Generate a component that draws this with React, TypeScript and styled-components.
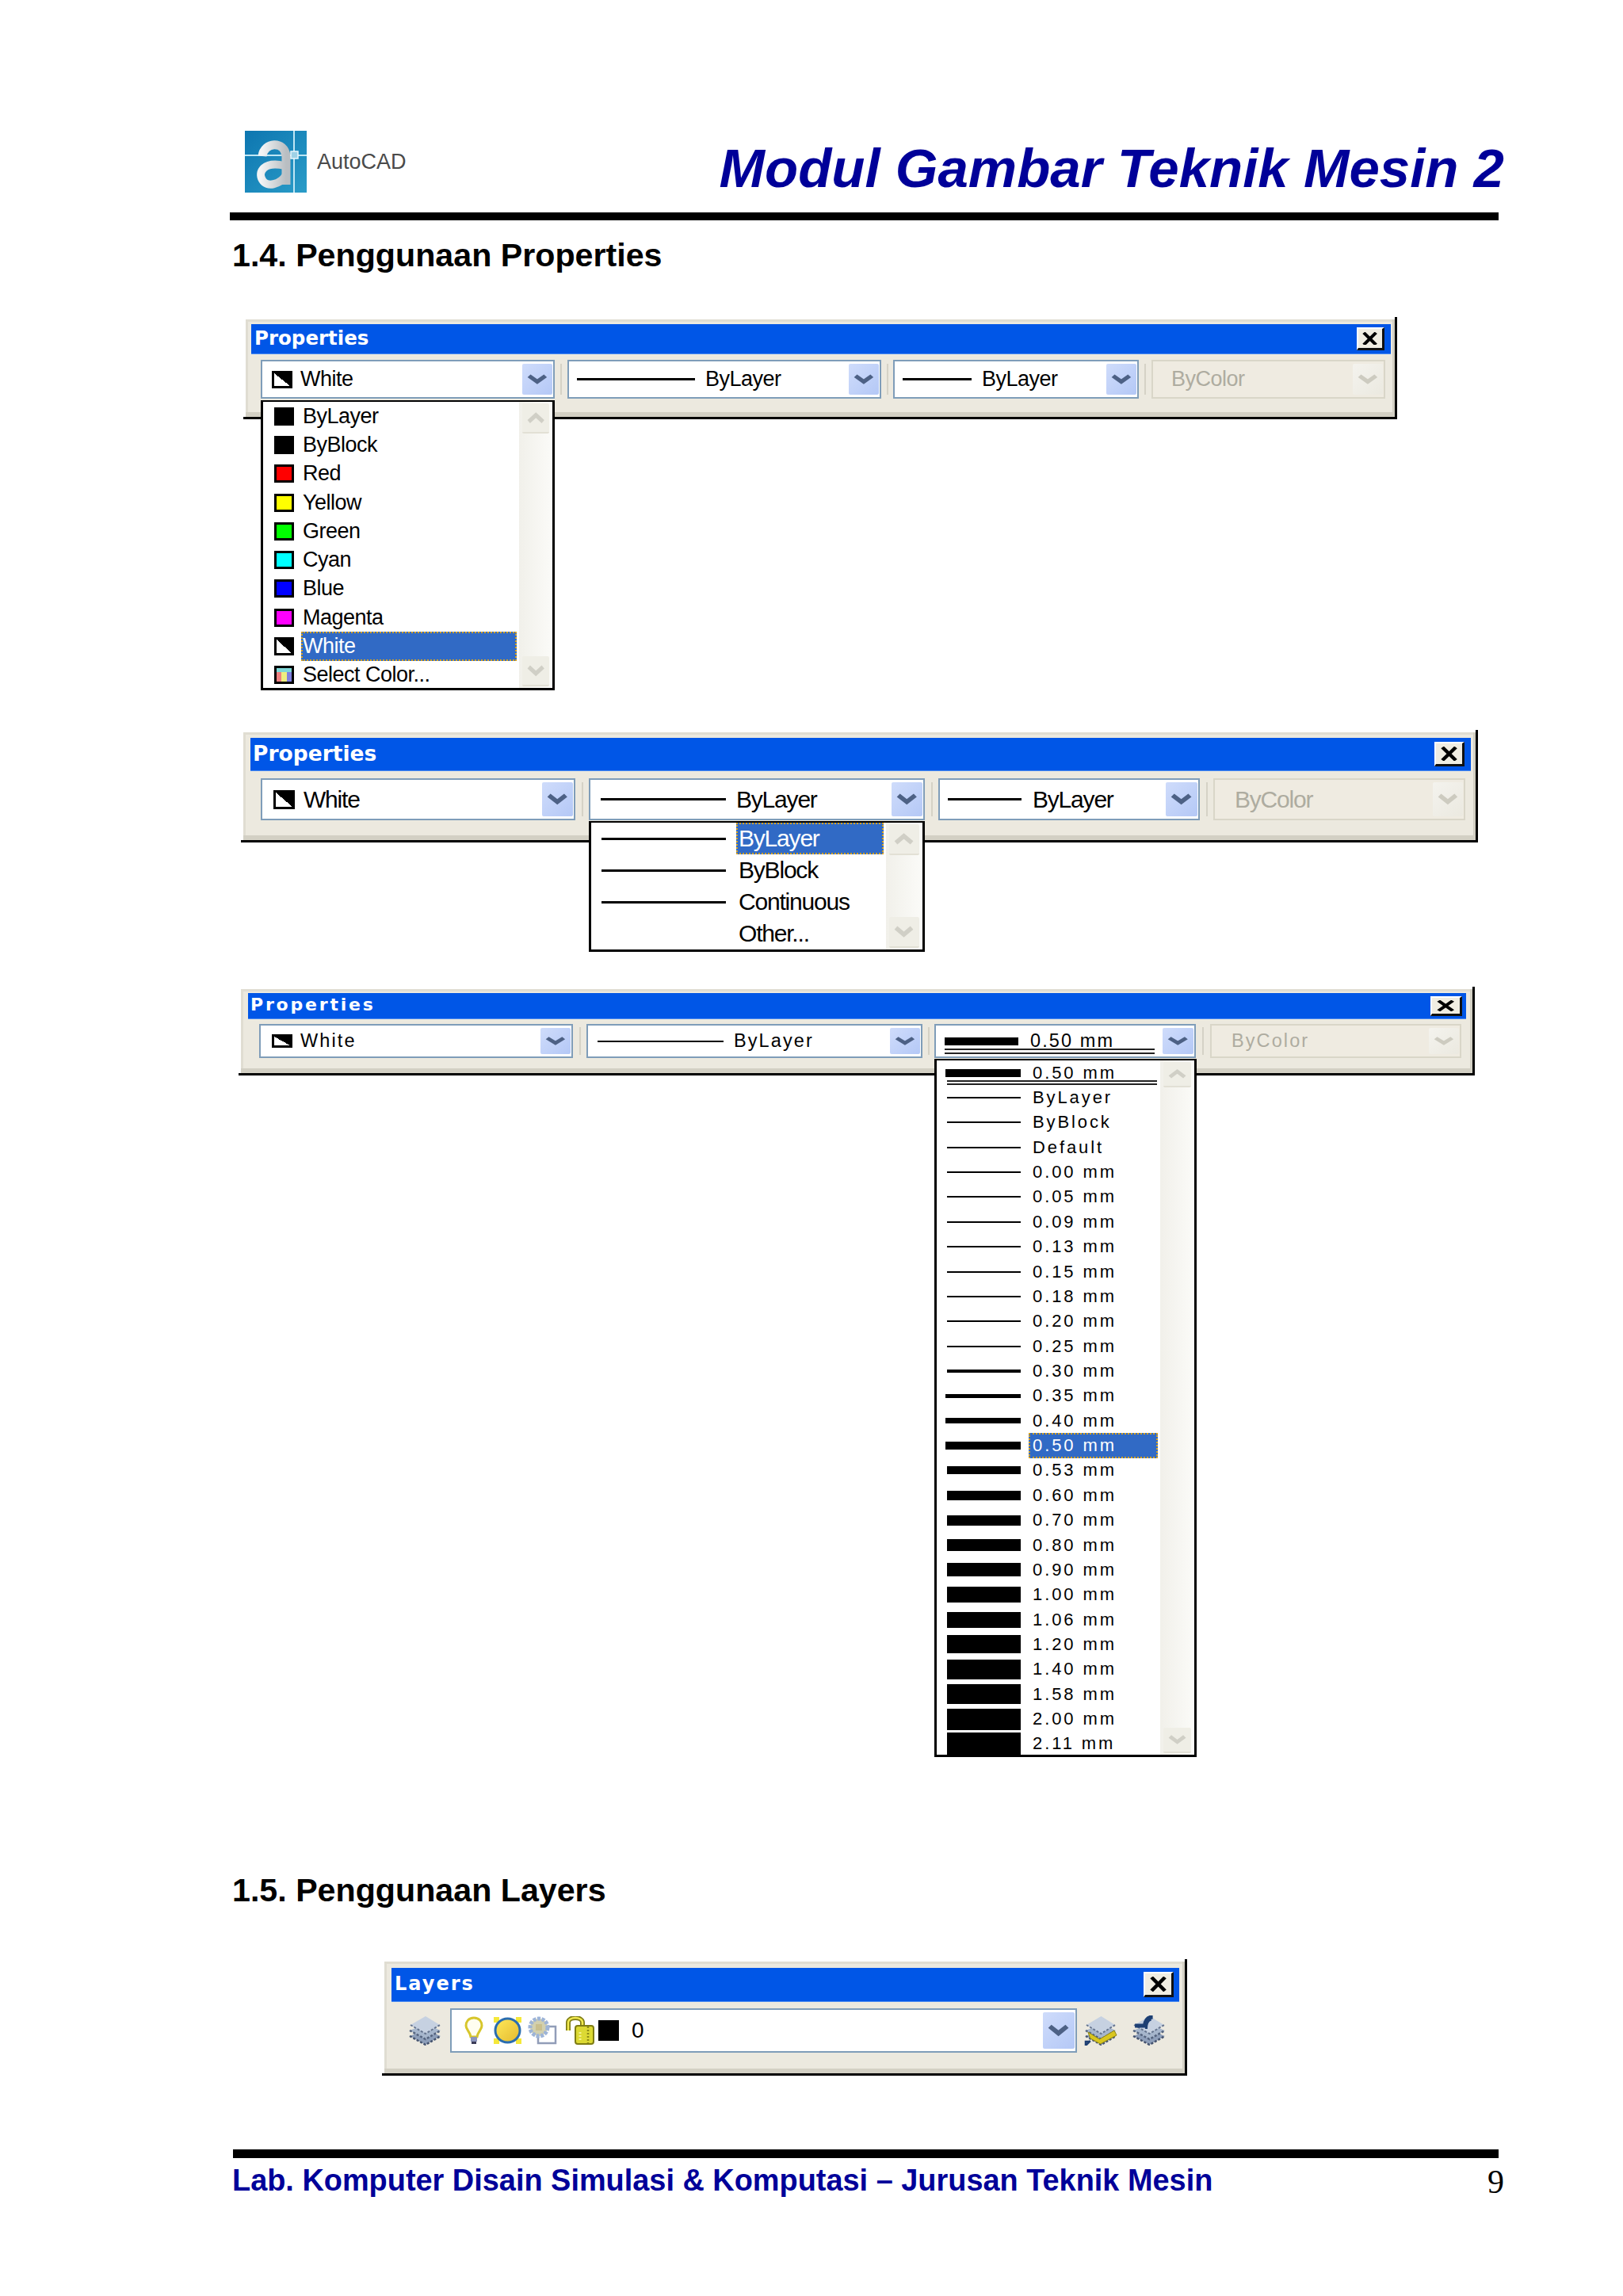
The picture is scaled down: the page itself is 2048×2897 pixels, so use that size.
import * as React from "react";
import styled, { createGlobalStyle } from "styled-components";

const GlobalStyle = createGlobalStyle`
  html, body {
    margin: 0;
    padding: 0;
    background: #fff;
  }
`;

const Page = styled.div`
  width: 2048px;
  height: 2897px;
  overflow: hidden;
  padding-top: 165px;
  box-sizing: border-box;
  font-family: "Liberation Sans", Arial, sans-serif;
  color: #000;
`;

const HeaderRow = styled.header`
  display: flex;
  align-items: flex-start;
  height: 78px;
  padding: 0 150px 0 309px;
`;

const Brand = styled.div`
  display: flex;
  align-items: center;
  gap: 13px;
  height: 78px;
`;

const BrandName = styled.span`
  font-size: 27px;
  color: #4a4a4a;
`;

const DocTitle = styled.h1`
  margin: 13px 0 0 auto;
  font-size: 69px;
  line-height: 70px;
  font-weight: bold;
  font-style: italic;
  color: #000099;
  white-space: nowrap;
`;

const Rule = styled.div<{ $left: number; $width: number; $height: number; $top: number }>`
  margin: ${(p) => p.$top}px 0 0 ${(p) => p.$left}px;
  width: ${(p) => p.$width}px;
  height: ${(p) => p.$height}px;
  background: #000;
`;

const SectionHeading = styled.h2<{ $top: number }>`
  margin: ${(p) => p.$top}px 0 0 293px;
  font-size: 41.2px;
  line-height: 41px;
  font-weight: bold;
`;

const Footer = styled.footer`
  display: flex;
  justify-content: space-between;
  margin-top: 9px;
  padding: 0 150px 0 293px;
`;

const FooterText = styled.span`
  font-size: 37.9px;
  line-height: 38px;
  font-weight: bold;
  color: #000099;
`;

const PageNumber = styled.span`
  font-family: "Liberation Serif", "Times New Roman", serif;
  font-size: 42px;
  line-height: 42px;
`;

/* ---- toolbar window ---- */

const Win = styled.section<{ $top: number; $left: number; $width: number; $height: number }>`
  position: relative;
  box-sizing: border-box;
  margin: ${(p) => p.$top}px 0 0 ${(p) => p.$left}px;
  width: ${(p) => p.$width}px;
  height: ${(p) => p.$height}px;
  background: #ece9df;
  border-right: 3px solid #000;
  border-bottom: 3px solid #000;
  box-shadow: inset -3px -6px 0 #d3d0c4, inset 3px 3px 0 #e0ddd2;

  &::before {
    content: "";
    position: absolute;
    right: -3px;
    top: -3px;
    width: 3px;
    height: 3px;
    background: #000;
  }

  &::after {
    content: "";
    position: absolute;
    left: -3px;
    bottom: -3px;
    width: 3px;
    height: 3px;
    background: #000;
  }
`;

const TitleBar = styled.div<{ $top: number; $left: number; $right: number; $height: number; $closeGap: number; $textPad: number }>`
  display: flex;
  align-items: center;
  justify-content: space-between;
  box-sizing: border-box;
  margin: 0 ${(p) => p.$right}px 0 ${(p) => p.$left}px;
  position: relative;
  top: ${(p) => p.$top}px;
  height: ${(p) => p.$height}px;
  padding: 0 ${(p) => p.$closeGap}px 0 ${(p) => p.$textPad}px;
  background: #0056e7;
  border-bottom: 1px solid #4c8cf0;
`;

const TitleText = styled.span<{ $size: number; $spacing: number }>`
  font-family: "DejaVu Sans", Verdana, sans-serif;
  font-weight: bold;
  font-size: ${(p) => p.$size}px;
  letter-spacing: ${(p) => p.$spacing}px;
  color: #fff;
  margin-top: -3px;
`;

const CloseButton = styled.div<{ $width: number; $height: number }>`
  box-sizing: border-box;
  display: flex;
  align-items: center;
  justify-content: center;
  width: ${(p) => p.$width}px;
  height: ${(p) => p.$height}px;
  background: #f0ede2;
  border-top: 2px solid #fff;
  border-left: 2px solid #fff;
  border-right: 3px solid #111;
  border-bottom: 3px solid #111;

  svg {
    width: 64%;
    height: 70%;
  }
`;

const ComboRow = styled.div<{ $top: number; $left: number }>`
  display: flex;
  align-items: stretch;
  position: relative;
  top: ${(p) => p.$top}px;
  margin-left: ${(p) => p.$left}px;
`;

const Separator = styled.div<{ $width: number }>`
  flex: none;
  width: ${(p) => p.$width}px;
  display: flex;
  align-items: center;
  justify-content: center;

  &::after {
    content: "";
    width: 2px;
    height: 80%;
    background: #d5d2c6;
  }
`;

const Combo = styled.div<{ $width: number; $height: number; $disabled?: boolean; $pad: number }>`
  position: relative;
  flex: none;
  box-sizing: border-box;
  display: flex;
  align-items: center;
  width: ${(p) => p.$width}px;
  height: ${(p) => p.$height}px;
  padding: 3px 1px 3px ${(p) => p.$pad}px;
  border: 2px solid ${(p) => (p.$disabled ? "#d9d6c8" : "#7f9db9")};
  background: ${(p) => (p.$disabled ? "#efebe1" : "#fff")};
`;

const ComboRule = styled.div<{ $left: number; $top: number; $width: number }>`
  position: absolute;
  left: ${(p) => p.$left}px;
  top: ${(p) => p.$top}px;
  width: ${(p) => p.$width}px;
  height: 3px;
  border-top: 2px solid #222;
  border-bottom: 2px solid #222;
`;

const Label = styled.span<{ $size: number; $spacing: number; $muted?: boolean; $gap?: number }>`
  margin-left: ${(p) => p.$gap || 0}px;
  font-size: ${(p) => p.$size}px;
  letter-spacing: ${(p) => p.$spacing}px;
  color: ${(p) => (p.$muted ? "#aeaca0" : "#000")};
  white-space: nowrap;
`;

const LineSample = styled.div<{ $width: number; $height: number }>`
  flex: none;
  width: ${(p) => p.$width}px;
  height: ${(p) => p.$height}px;
  background: #000;
`;

const ArrowButton = styled.div<{ $width: number; $disabled?: boolean }>`
  flex: none;
  align-self: stretch;
  margin-left: auto;
  width: ${(p) => p.$width}px;
  display: flex;
  align-items: center;
  justify-content: center;
  border-radius: 2px;
  background: ${(p) =>
    p.$disabled
      ? "linear-gradient(135deg, #f4f3ee, #ebe9e0)"
      : "linear-gradient(135deg, #cfdcfb, #b4c8f6)"};

  svg {
    width: 68%;
    height: 38%;
  }
`;

const Swatch = styled.div<{ $color: string; $width: number; $height: number }>`
  flex: none;
  box-sizing: border-box;
  width: ${(p) => p.$width}px;
  height: ${(p) => p.$height}px;
  border: 3px solid #000;
  background: ${(p) => p.$color};
`;

/* ---- dropdown list ---- */

const Dropdown = styled.div<{ $left: number; $top: number; $width: number; $height: number }>`
  position: absolute;
  z-index: 2;
  box-sizing: border-box;
  display: flex;
  left: ${(p) => p.$left}px;
  top: ${(p) => p.$top}px;
  width: ${(p) => p.$width}px;
  height: ${(p) => p.$height}px;
  background: #fff;
  border: 3px solid #000;
  border-top-width: 2px;
`;

const ListColumn = styled.div`
  flex: 1;
  min-width: 0;
`;

const ListRow = styled.div<{ $height: number }>`
  position: relative;
  display: flex;
  align-items: center;
  height: ${(p) => p.$height}px;
`;

const RowIcon = styled.div<{ $width: number; $pad: number }>`
  flex: none;
  box-sizing: border-box;
  display: flex;
  align-items: center;
  width: ${(p) => p.$width}px;
  padding-left: ${(p) => p.$pad}px;
`;

const RowText = styled.div<{ $pad: number; $selected?: boolean; $size: number; $spacing: number }>`
  flex: 1;
  box-sizing: border-box;
  align-self: stretch;
  display: flex;
  align-items: center;
  margin-right: 3px;
  padding-left: ${(p) => p.$pad}px;
  font-size: ${(p) => p.$size}px;
  letter-spacing: ${(p) => p.$spacing}px;
  white-space: nowrap;
  color: ${(p) => (p.$selected ? "#fff" : "#000")};
  background: ${(p) => (p.$selected ? "#316ac5" : "transparent")};
  outline: ${(p) => (p.$selected ? "2px dotted #d9a320" : "none")};
  outline-offset: -2px;
`;

const RowDoubleRule = styled.div<{ $left: number; $width: number }>`
  position: absolute;
  left: ${(p) => p.$left}px;
  bottom: 0;
  width: ${(p) => p.$width}px;
  height: 2px;
  border-top: 2px solid #222;
  border-bottom: 2px solid #222;
`;

const ScrollTrack = styled.div<{ $width: number }>`
  flex: none;
  box-sizing: border-box;
  display: flex;
  flex-direction: column;
  justify-content: space-between;
  width: ${(p) => p.$width}px;
  padding: 2px 4px;
  background: linear-gradient(90deg, #f1f0ea, #fbfbf8);
`;

const ScrollButton = styled.div<{ $height: number }>`
  display: flex;
  align-items: center;
  justify-content: center;
  height: ${(p) => p.$height}px;
  background: #efeee6;
  border-radius: 2px;
  border-bottom: 2px solid #e2e0d5;

  svg {
    width: 66%;
    height: 46%;
  }
`;

/* ---- layers toolbar ---- */

const IconSlot = styled.div<{ $width: number; $height: number; $gap?: number }>`
  flex: none;
  margin-left: ${(p) => p.$gap || 0}px;
  width: ${(p) => p.$width}px;
  height: ${(p) => p.$height}px;

  svg {
    display: block;
    width: 100%;
    height: 100%;
  }
`;

const LayerIconColumn = styled.div<{ $width: number; $gap: number; $after?: number }>`
  flex: none;
  display: flex;
  align-items: center;
  margin-left: ${(p) => p.$gap}px;
  margin-right: ${(p) => p.$after || 0}px;
  width: ${(p) => p.$width}px;
  height: 56px;

  svg {
    display: block;
    width: 100%;
    height: 38px;
  }
`;

const BlackBlock = styled.div`
  flex: none;
  margin-left: 5px;
  width: 26px;
  height: 26px;
  background: #000;
`;

/* ---- drawings ---- */

const Chevron: React.FC<{ dir?: "up" | "down"; color?: string }> = ({ dir = "down", color = "#4d6185" }) => (
  <svg viewBox="0 0 20 14" preserveAspectRatio="none">
    <polyline
      points={dir === "down" ? "2,3 10,10 18,3" : "2,11 10,4 18,11"}
      fill="none"
      stroke={color}
      strokeWidth="4.5"
    />
  </svg>
);

const CloseGlyph = () => (
  <svg viewBox="0 0 20 20" preserveAspectRatio="none">
    <path d="M2 1 L18 19 M18 1 L2 19" stroke="#000" strokeWidth="4.5" fill="none" />
  </svg>
);

const AutoCadLogo = () => (
  <svg width="78" height="78" viewBox="0 0 78 78">
    <defs>
      <linearGradient id="logoBg" x1="0" y1="0" x2="1" y2="1">
        <stop offset="0" stopColor="#0d76b0" />
        <stop offset="1" stopColor="#2a9cc8" />
      </linearGradient>
      <linearGradient id="logoA" x1="0" y1="0" x2="1" y2="0">
        <stop offset="0" stopColor="#f2f4f5" />
        <stop offset="1" stopColor="#b9bec2" />
      </linearGradient>
    </defs>
    <rect width="78" height="78" fill="url(#logoBg)" />
    <path d="M0 31 H78 M62 0 V78" stroke="#bfe6f4" strokeWidth="2" />
    <path d="M22 32 C24 14 50 12 52 32 V68" fill="none" stroke="url(#logoA)" strokeWidth="11" />
    <path d="M50 44 C24 38 16 52 22 62 C28 72 44 68 52 56" fill="none" stroke="url(#logoA)" strokeWidth="10" />
    <rect x="58" y="26" width="9" height="9" fill="#9ed2e6" stroke="#e8f6fb" strokeWidth="1.5" />
  </svg>
);

const LayerStack = () => (
  <g>
    <polygon points="2,26 22,18 41,26 22,37" fill="#8e9fba" />
    <path d="M2 26 L22 37 L41 26" fill="none" stroke="#46546f" strokeWidth="2.5" strokeDasharray="3 2" />
    <polygon points="2,19 22,11 41,19 22,30" fill="#a6b6cc" />
    <path d="M2 19 L22 30 L41 19" fill="none" stroke="#55647f" strokeWidth="2.5" strokeDasharray="3 2" />
    <polygon points="3,12 22,1 40,12 22,23" fill="#c6d1e1" />
    <path d="M3 12 L22 23 L40 12" fill="none" stroke="#66758f" strokeWidth="2" strokeDasharray="3 2" />
  </g>
);

const LayersIcon = () => (
  <svg viewBox="0 0 43 38" preserveAspectRatio="none">
    <LayerStack />
  </svg>
);

const LayerPreviousIcon = () => (
  <svg viewBox="0 0 43 38" preserveAspectRatio="none">
    <LayerStack />
    <path d="M5 21 L20 30 L39 19 L42 25 L21 36 L8 29 Z" fill="#d9c61f" stroke="#8c8416" strokeWidth="1" />
    <path d="M2 38 L2 33 L7 33 M2 38 L8 32" stroke="#1d3f73" strokeWidth="2.5" fill="none" />
  </svg>
);

const LayerMatchIcon = () => (
  <svg viewBox="0 0 43 38" preserveAspectRatio="none">
    <LayerStack />
    <path d="M4 13 L16 13 C17 6 20 2 26 2" fill="none" stroke="#1d3f73" strokeWidth="5" />
    <path d="M18 17 C18 10 20 6 24 5" fill="none" stroke="#1d3f73" strokeWidth="3" />
  </svg>
);

const BulbIcon = () => (
  <svg viewBox="0 0 24 36" preserveAspectRatio="none">
    <path
      d="M12 2 C5 2 2 7 2 12 C2 17 7 19 8 26 H16 C17 19 22 17 22 12 C22 7 19 2 12 2 Z"
      fill="#fffef0"
      stroke="#d7c62c"
      strokeWidth="3"
    />
    <rect x="8" y="26" width="8" height="6" fill="#8c95bb" />
    <rect x="9" y="32" width="6" height="3" fill="#3c3c58" />
  </svg>
);

const SunIcon = () => (
  <svg viewBox="0 0 35 34" preserveAspectRatio="none">
    <defs>
      <linearGradient id="sunFill" x1="0" y1="0" x2="1" y2="1">
        <stop offset="0" stopColor="#ffe95a" />
        <stop offset="1" stopColor="#e3b92e" />
      </linearGradient>
    </defs>
    <path d="M0 0 H7 V7 H0 Z M28 0 H35 V7 H28 Z M0 27 H7 V34 H0 Z M28 27 H35 V34 H28 Z" fill="#f5e83a" />
    <ellipse cx="17.5" cy="17" rx="15.5" ry="15" fill="url(#sunFill)" stroke="#2a6db0" strokeWidth="3" />
  </svg>
);

const GearIcon = () => (
  <svg viewBox="0 0 37 36" preserveAspectRatio="none">
    <rect x="13" y="13" width="22" height="21" fill="#fff" stroke="#919db8" strokeWidth="2.5" />
    <circle cx="14" cy="14" r="11" fill="#d2d0ae" stroke="#9db4d8" strokeWidth="5" strokeDasharray="4 1.5" />
    <rect x="10" y="10" width="8" height="8" fill="#c9bf8d" />
  </svg>
);

const LockIcon = () => (
  <svg viewBox="0 0 37 36" preserveAspectRatio="none">
    <path d="M4 18 V8 C4 0 22 0 22 8 V16" fill="none" stroke="#7f7d14" strokeWidth="6" />
    <path d="M4 18 V8 C4 0 22 0 22 8 V16" fill="none" stroke="#f2ea50" strokeWidth="2.5" />
    <rect x="13" y="12" width="23" height="23" rx="3" fill="#dcd934" stroke="#7f7d14" strokeWidth="2" />
    <path d="M29 13 V34" stroke="#8d8b16" strokeWidth="2.5" strokeDasharray="2 2" />
    <path d="M19 20 V30" stroke="#f6f190" strokeWidth="3" strokeDasharray="2 2" />
  </svg>
);

const WHITE_SWATCH = "linear-gradient(to top right, #fff 50%, #000 50%)";

const COLORS: { name: string; color: string }[] = [
  { name: "ByLayer", color: "#000" },
  { name: "ByBlock", color: "#000" },
  { name: "Red", color: "#ff0000" },
  { name: "Yellow", color: "#ffff00" },
  { name: "Green", color: "#00ff00" },
  { name: "Cyan", color: "#00ffff" },
  { name: "Blue", color: "#0000ff" },
  { name: "Magenta", color: "#ff00ff" },
  { name: "White", color: WHITE_SWATCH },
  {
    name: "Select Color...",
    color: "linear-gradient(180deg, #7fd8d8 30%, transparent 30%), linear-gradient(90deg, #ee8080 33%, #eeee80 33%, #eeee80 66%, #8080e0 66%)",
  },
];

const LINETYPES = [
  { name: "ByLayer", line: true },
  { name: "ByBlock", line: true },
  { name: "Continuous", line: true },
  { name: "Other...", line: false },
];

const LINEWEIGHTS: { name: string; h: number; w: number }[] = [
  { name: "ByLayer", h: 2, w: 93 },
  { name: "ByBlock", h: 2, w: 93 },
  { name: "Default", h: 2, w: 93 },
  { name: "0.00 mm", h: 2, w: 93 },
  { name: "0.05 mm", h: 2, w: 93 },
  { name: "0.09 mm", h: 2, w: 93 },
  { name: "0.13 mm", h: 2, w: 93 },
  { name: "0.15 mm", h: 2, w: 93 },
  { name: "0.18 mm", h: 2, w: 93 },
  { name: "0.20 mm", h: 2, w: 93 },
  { name: "0.25 mm", h: 2, w: 93 },
  { name: "0.30 mm", h: 4, w: 93 },
  { name: "0.35 mm", h: 5, w: 95 },
  { name: "0.40 mm", h: 7, w: 95 },
  { name: "0.50 mm", h: 10, w: 95 },
  { name: "0.53 mm", h: 10, w: 93 },
  { name: "0.60 mm", h: 12, w: 93 },
  { name: "0.70 mm", h: 13, w: 93 },
  { name: "0.80 mm", h: 15, w: 93 },
  { name: "0.90 mm", h: 17, w: 93 },
  { name: "1.00 mm", h: 20, w: 93 },
  { name: "1.06 mm", h: 20, w: 93 },
  { name: "1.20 mm", h: 23, w: 93 },
  { name: "1.40 mm", h: 25, w: 93 },
  { name: "1.58 mm", h: 25, w: 93 },
  { name: "2.00 mm", h: 27, w: 93 },
  { name: "2.11 mm", h: 28, w: 93 },
];

const ScrollBar: React.FC<{ width: number; btn: number }> = ({ width, btn }) => (
  <ScrollTrack $width={width}>
    <ScrollButton $height={btn}>
      <Chevron dir="up" color="#d0cfc6" />
    </ScrollButton>
    <ScrollButton $height={btn}>
      <Chevron color="#d0cfc6" />
    </ScrollButton>
  </ScrollTrack>
);

type FontSpec = { size: number; spacing: number };

const ByColorCombo: React.FC<{ width: number; height: number; pad: number; btn: number; font: FontSpec }> = ({
  width,
  height,
  pad,
  btn,
  font,
}) => (
  <Combo $width={width} $height={height} $pad={pad} $disabled>
    <Label $size={font.size} $spacing={font.spacing} $muted>
      ByColor
    </Label>
    <ArrowButton $width={btn} $disabled>
      <Chevron color="#cdcbc0" />
    </ArrowButton>
  </Combo>
);

export default function App() {
  const f1 = { size: 27, spacing: -0.5 };
  const f2 = { size: 30, spacing: -1.2 };
  const f3 = { size: 23.5, spacing: 2.1 };
  const f3list = { size: 22, spacing: 2.9 };

  return (
    <Page>
      <GlobalStyle />
      <HeaderRow>
        <Brand>
          <AutoCadLogo />
          <BrandName>AutoCAD</BrandName>
        </Brand>
        <DocTitle>Modul Gambar Teknik Mesin 2</DocTitle>
      </HeaderRow>
      <Rule $left={290} $width={1601} $height={10} $top={25} />
      <SectionHeading $top={24}>1.4. Penggunaan Properties</SectionHeading>

      {/* colour list open */}
      <Win $top={60} $left={310} $width={1453} $height={126}>
        <TitleBar $top={6} $left={7} $right={5} $height={38} $closeGap={8} $textPad={4}>
          <TitleText $size={24.5} $spacing={0}>Properties</TitleText>
          <CloseButton $width={35} $height={29}>
            <CloseGlyph />
          </CloseButton>
        </TitleBar>
        <ComboRow $top={13} $left={19}>
          <Combo $width={371} $height={49} $pad={12}>
            <Swatch $color={WHITE_SWATCH} $width={26} $height={22} />
            <Label $size={f1.size} $spacing={f1.spacing} $gap={10}>White</Label>
            <ArrowButton $width={38}><Chevron /></ArrowButton>
          </Combo>
          <Separator $width={16} />
          <Combo $width={396} $height={49} $pad={10}>
            <LineSample $width={149} $height={3} />
            <Label $size={f1.size} $spacing={f1.spacing} $gap={13}>ByLayer</Label>
            <ArrowButton $width={38}><Chevron /></ArrowButton>
          </Combo>
          <Separator $width={15} />
          <Combo $width={310} $height={49} $pad={10}>
            <LineSample $width={87} $height={3} />
            <Label $size={f1.size} $spacing={f1.spacing} $gap={13}>ByLayer</Label>
            <ArrowButton $width={38}><Chevron /></ArrowButton>
          </Combo>
          <Separator $width={16} />
          <ByColorCombo width={295} height={49} pad={23} btn={38} font={f1} />
        </ComboRow>
        <Dropdown $left={19} $top={102} $width={371} $height={366}>
          <ListColumn>
            {COLORS.map((c) => (
              <ListRow key={c.name} $height={36.3}>
                <RowIcon $width={48} $pad={14}>
                  <Swatch $color={c.color} $width={25} $height={23} />
                </RowIcon>
                <RowText $pad={2} $size={f1.size} $spacing={f1.spacing} $selected={c.name === "White"}>
                  {c.name}
                </RowText>
              </ListRow>
            ))}
          </ListColumn>
          <ScrollBar width={42} btn={36} />
        </Dropdown>
      </Win>

      {/* linetype list open */}
      <Win $top={395} $left={307} $width={1558} $height={139}>
        <TitleBar $top={7} $left={9} $right={6} $height={42} $closeGap={8} $textPad={3}>
          <TitleText $size={26.5} $spacing={0}>Properties</TitleText>
          <CloseButton $width={38} $height={31}>
            <CloseGlyph />
          </CloseButton>
        </TitleBar>
        <ComboRow $top={16} $left={22}>
          <Combo $width={397} $height={53} $pad={14}>
            <Swatch $color={WHITE_SWATCH} $width={27} $height={24} />
            <Label $size={f2.size} $spacing={f2.spacing} $gap={11}>White</Label>
            <ArrowButton $width={39}><Chevron /></ArrowButton>
          </Combo>
          <Separator $width={17} />
          <Combo $width={424} $height={53} $pad={13}>
            <LineSample $width={158} $height={3} />
            <Label $size={f2.size} $spacing={f2.spacing} $gap={13}>ByLayer</Label>
            <ArrowButton $width={39}><Chevron /></ArrowButton>
          </Combo>
          <Separator $width={17} />
          <Combo $width={330} $height={53} $pad={10}>
            <LineSample $width={93} $height={3} />
            <Label $size={f2.size} $spacing={f2.spacing} $gap={14}>ByLayer</Label>
            <ArrowButton $width={40}><Chevron /></ArrowButton>
          </Combo>
          <Separator $width={17} />
          <ByColorCombo width={318} height={53} pad={25} btn={38} font={f2} />
        </ComboRow>
        <Dropdown $left={436} $top={112} $width={424} $height={165}>
          <ListColumn>
            {LINETYPES.map((t, i) => (
              <ListRow key={t.name} $height={40}>
                <RowIcon $width={183} $pad={13}>
                  {t.line && <LineSample $width={157} $height={3} />}
                </RowIcon>
                <RowText $pad={3} $size={f2.size} $spacing={f2.spacing} $selected={i === 0}>
                  {t.name}
                </RowText>
              </ListRow>
            ))}
          </ListColumn>
          <ScrollBar width={46} btn={37} />
        </Dropdown>
      </Win>

      {/* lineweight list open */}
      <Win $top={185} $left={304} $width={1557} $height={109}>
        <TitleBar $top={5} $left={9} $right={8} $height={33} $closeGap={5} $textPad={3}>
          <TitleText $size={22} $spacing={2.8}>Properties</TitleText>
          <CloseButton $width={40} $height={25}>
            <CloseGlyph />
          </CloseButton>
        </TitleBar>
        <ComboRow $top={11} $left={23}>
          <Combo $width={396} $height={43} $pad={14}>
            <Swatch $color={WHITE_SWATCH} $width={26} $height={17} />
            <Label $size={f3.size} $spacing={f3.spacing} $gap={10}>White</Label>
            <ArrowButton $width={38}><Chevron /></ArrowButton>
          </Combo>
          <Separator $width={17} />
          <Combo $width={424} $height={43} $pad={12}>
            <LineSample $width={159} $height={2} />
            <Label $size={f3.size} $spacing={f3.spacing} $gap={13}>ByLayer</Label>
            <ArrowButton $width={38}><Chevron /></ArrowButton>
          </Combo>
          <Separator $width={15} />
          <Combo $width={330} $height={43} $pad={11}>
            <LineSample $width={93} $height={10} />
            <Label $size={f3.size} $spacing={f3.spacing} $gap={15}>0.50 mm</Label>
            <ComboRule $left={11} $top={29} $width={265} />
            <ArrowButton $width={39}><Chevron /></ArrowButton>
          </Combo>
          <Separator $width={18} />
          <ByColorCombo width={317} height={43} pad={25} btn={38} font={f3} />
        </ComboRow>
        <Dropdown $left={875} $top={88} $width={331} $height={881}>
          <ListColumn>
            <ListRow $height={31.37}>
              <RowIcon $width={116} $pad={11}>
                <LineSample $width={95} $height={10} />
              </RowIcon>
              <RowText $pad={5} $size={f3list.size} $spacing={f3list.spacing}>0.50 mm</RowText>
              <RowDoubleRule $left={13} $width={265} />
            </ListRow>
            {LINEWEIGHTS.map((w, i) => (
              <ListRow key={w.name + i} $height={31.37}>
                <RowIcon $width={116} $pad={w.w === 95 ? 11 : 13}>
                  <LineSample $width={w.w} $height={w.h} />
                </RowIcon>
                <RowText $pad={5} $size={f3list.size} $spacing={f3list.spacing} $selected={i === 14}>
                  {w.name}
                </RowText>
              </ListRow>
            ))}
          </ListColumn>
          <ScrollBar width={43} btn={30} />
        </Dropdown>
      </Win>

      <SectionHeading $top={1008}>1.5. Penggunaan Layers</SectionHeading>

      <Win $top={69} $left={485} $width={1013} $height={144}>
        <TitleBar $top={8} $left={9} $right={7} $height={43} $closeGap={7} $textPad={4}>
          <TitleText $size={24} $spacing={2}>Layers</TitleText>
          <CloseButton $width={38} $height={32}>
            <CloseGlyph />
          </CloseButton>
        </TitleBar>
        <ComboRow $top={16} $left={0}>
          <LayerIconColumn $width={43} $gap={30} $after={10}>
            <LayersIcon />
          </LayerIconColumn>
          <Combo $width={791} $height={56} $pad={16}>
            <IconSlot $width={24} $height={36}><BulbIcon /></IconSlot>
            <IconSlot $width={35} $height={34} $gap={13}><SunIcon /></IconSlot>
            <IconSlot $width={37} $height={36} $gap={8}><GearIcon /></IconSlot>
            <IconSlot $width={37} $height={36} $gap={10}><LockIcon /></IconSlot>
            <BlackBlock />
            <Label $size={28} $spacing={0} $gap={16}>0</Label>
            <ArrowButton $width={40}><Chevron /></ArrowButton>
          </Combo>
          <LayerIconColumn $width={42} $gap={9}>
            <LayerPreviousIcon />
          </LayerIconColumn>
          <LayerIconColumn $width={44} $gap={18}>
            <LayerMatchIcon />
          </LayerIconColumn>
        </ComboRow>
      </Win>

      <Rule $left={294} $width={1597} $height={11} $top={93} />
      <Footer>
        <FooterText>Lab. Komputer Disain Simulasi &amp; Komputasi – Jurusan Teknik Mesin</FooterText>
        <PageNumber>9</PageNumber>
      </Footer>
    </Page>
  );
}
